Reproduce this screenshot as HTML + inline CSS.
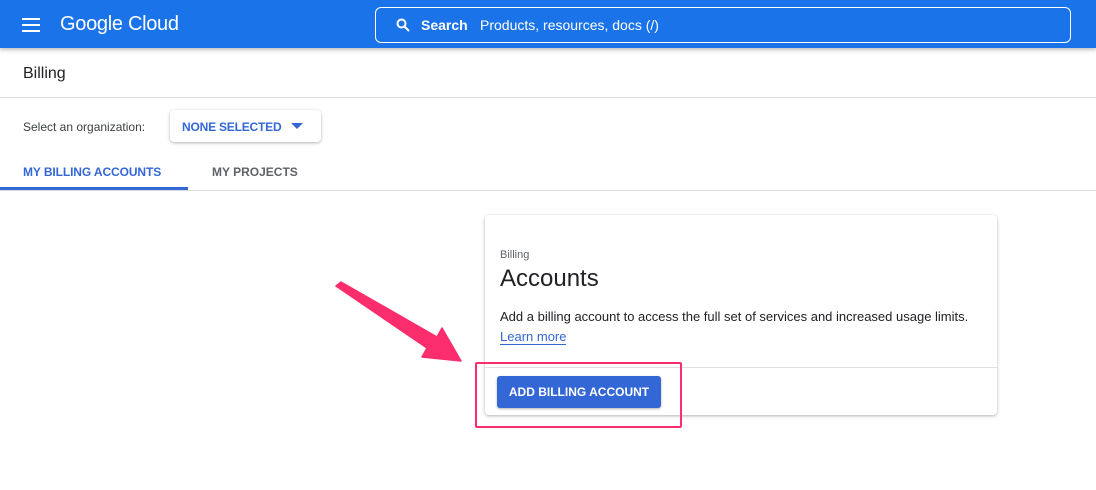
<!DOCTYPE html>
<html><head><style>
*{margin:0;padding:0;box-sizing:border-box}
body{width:1096px;height:490px;background:#fff;font-family:"Liberation Sans",Arial,sans-serif;position:relative;overflow:hidden;color:#202124}
.top{position:absolute;left:0;top:0;width:1096px;height:48px;background:#1a73e8;box-shadow:0 2px 4px rgba(0,0,0,.25)}
.abs{position:absolute}
</style></head><body>
<div class="top">
 <div class="abs" style="left:22px;top:18px;width:18px;height:2px;background:#fff;box-shadow:0 6px 0 #fff,0 12px 0 #fff"></div>
 <div class="abs" style="left:60px;top:13px;color:#fff;font-size:20px;letter-spacing:-0.3px">Google Cloud</div>
 <div class="abs" style="left:375px;top:7px;width:696px;height:36px;border:1px solid #fff;border-radius:6px"></div>
 <svg class="abs" style="left:396px;top:18px" width="14" height="14" viewBox="0 0 14 14"><circle cx="5.5" cy="5.5" r="4" fill="none" stroke="#fff" stroke-width="2"/><path d="M8.5 8.5L13 13" stroke="#fff" stroke-width="2"/></svg>
 <div class="abs" style="left:421px;top:17px;color:#fff;font-size:14px;font-weight:bold">Search</div>
 <div class="abs" style="left:480px;top:17px;color:#fff;font-size:14px">Products, resources, docs (/)</div>
</div>
<div class="abs" style="left:23px;top:65px;font-size:16px">Billing</div>
<div class="abs" style="left:0;top:97px;width:1096px;height:1px;background:#dadce0"></div>
<div class="abs" style="left:23px;top:120px;font-size:12px;color:#3c4043">Select an organization:</div>
<div class="abs" style="left:170px;top:110px;width:151px;height:32px;border-radius:4px;box-shadow:0 1px 3px rgba(0,0,0,.3);background:#fff"></div>
<div class="abs" style="left:182px;top:120px;font-size:12px;font-weight:bold;color:#3367d6;letter-spacing:-0.2px">NONE SELECTED</div>
<div class="abs" style="left:291px;top:123px;width:0;height:0;border-left:6px solid transparent;border-right:6px solid transparent;border-top:6px solid #3367d6"></div>
<div class="abs" style="left:23px;top:165px;font-size:12px;font-weight:bold;color:#3367d6;letter-spacing:-0.1px">MY BILLING ACCOUNTS</div>
<div class="abs" style="left:212px;top:165px;font-size:12px;font-weight:bold;color:#5f6368">MY PROJECTS</div>
<div class="abs" style="left:0;top:187px;width:188px;height:3px;background:#3367d6"></div>
<div class="abs" style="left:0;top:190px;width:1096px;height:1px;background:#dadce0"></div>
<div class="abs" style="left:485px;top:215px;width:512px;height:200px;border-radius:4px;box-shadow:0 1px 3px rgba(0,0,0,.3);background:#fff"></div>
<div class="abs" style="left:485px;top:367px;width:512px;height:1px;background:#e0e0e0"></div>
<div class="abs" style="left:500px;top:249px;font-size:11px;color:#5f6368">Billing</div>
<div class="abs" style="left:500px;top:265px;font-size:24px">Accounts</div>
<div class="abs" style="left:500px;top:309px;font-size:13px">Add a billing account to access the full set of services and increased usage limits.</div>
<div class="abs" style="left:500px;top:329px;font-size:13px;color:#3367d6;border-bottom:1px solid #3367d6;line-height:15px">Learn more</div>
<div class="abs" style="left:497px;top:376px;width:164px;height:32px;background:#3367d6;border-radius:3px;box-shadow:0 1px 2px rgba(0,0,0,.3);color:#fff;font-size:12px;font-weight:bold;text-align:center;line-height:32px">ADD BILLING ACCOUNT</div>
<div class="abs" style="left:475px;top:362px;width:207px;height:66px;border:2px solid #fb2d6c;border-radius:2px"></div>
<svg class="abs" style="left:0;top:0" width="1096" height="490"><path d="M336 286L427 348L422 357L461 361L442 328L437 337L341 282Z" fill="#fb2d6c" stroke="#fb2d6c" stroke-width="1.5" stroke-linejoin="round"/></svg>
</body></html>
